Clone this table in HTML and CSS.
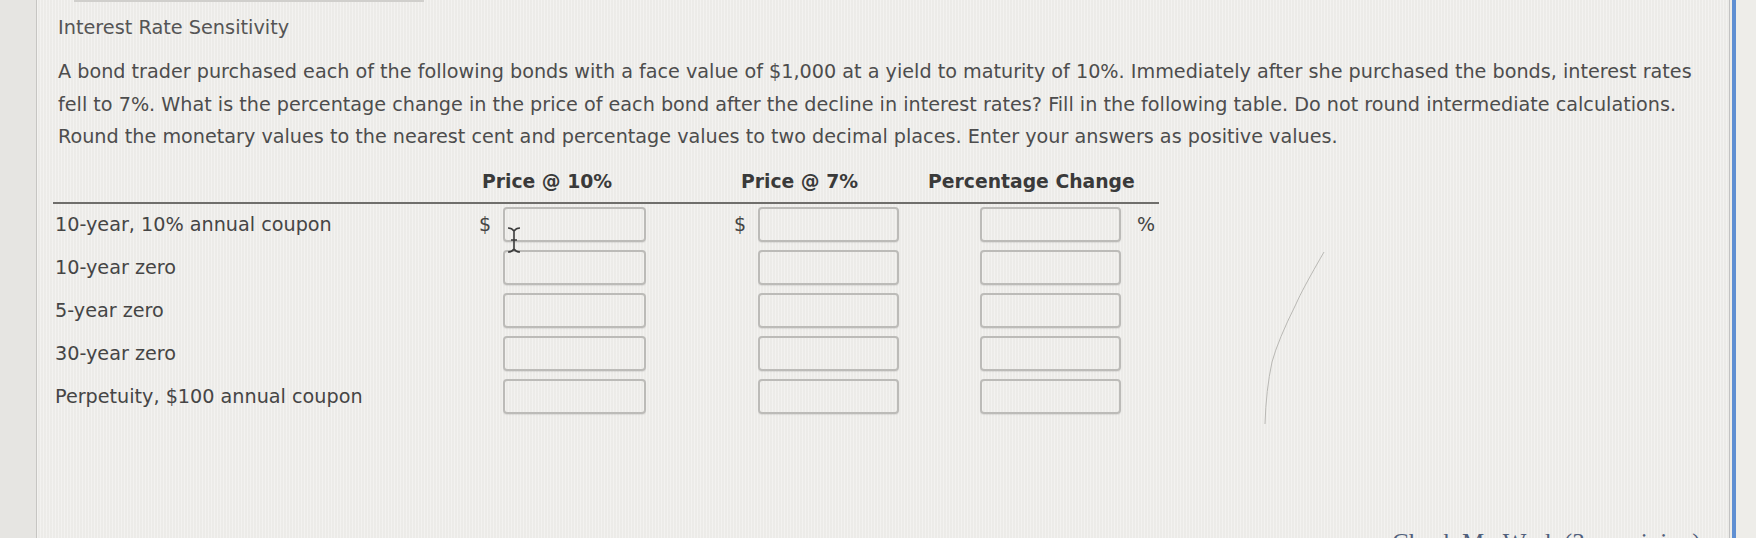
FILE: index.html
```html
<!DOCTYPE html>
<html lang="en">
<head>
<meta charset="utf-8">
<title>Interest Rate Sensitivity</title>
<link rel="stylesheet" href="styles.css">
</head>
<body>
<div class="screen">
  <div class="gutter"></div>
  <div class="panel">
    <div class="tabline"></div>
    <h1 class="title">Interest Rate Sensitivity</h1>
    <p class="prompt">A bond trader purchased each of the following bonds with a face value of $1,000 at a yield to maturity of 10%. Immediately after she purchased the bonds, interest rates<br>fell to 7%. What is the percentage change in the price of each bond after the decline in interest rates? Fill in the following table. Do not round intermediate calculations.<br>Round the monetary values to the nearest cent and percentage values to two decimal places. Enter your answers as positive values.</p>

    <div class="table-head">
      <div class="th th-p10">Price @ 10%</div>
      <div class="th th-p7">Price @ 7%</div>
      <div class="th th-pc">Percentage Change</div>
    </div>

    <div class="table-body">
      <div class="label">10-year, 10% annual coupon</div>
      <div class="unit">$</div><div class="box"></div>
      <div class="spacer"></div>
      <div class="unit">$</div><div class="box"></div>
      <div class="spacer"></div>
      <div class="box"></div><div class="unit pct">%</div>

      <div class="label">10-year zero</div>
      <div class="unit"></div><div class="box"></div>
      <div class="spacer"></div>
      <div class="unit"></div><div class="box"></div>
      <div class="spacer"></div>
      <div class="box"></div><div class="unit"></div>

      <div class="label">5-year zero</div>
      <div class="unit"></div><div class="box"></div>
      <div class="spacer"></div>
      <div class="unit"></div><div class="box"></div>
      <div class="spacer"></div>
      <div class="box"></div><div class="unit"></div>

      <div class="label">30-year zero</div>
      <div class="unit"></div><div class="box"></div>
      <div class="spacer"></div>
      <div class="unit"></div><div class="box"></div>
      <div class="spacer"></div>
      <div class="box"></div><div class="unit"></div>

      <div class="label">Perpetuity, $100 annual coupon</div>
      <div class="unit"></div><div class="box"></div>
      <div class="spacer"></div>
      <div class="unit"></div><div class="box"></div>
      <div class="spacer"></div>
      <div class="box"></div><div class="unit"></div>
    </div>

    <div class="check">Check My Work (3 remaining)</div>

    <svg class="ibeam" width="16" height="28" viewBox="0 0 16 28" aria-hidden="true">
      <path d="M2 2 Q6 2 8 5 Q10 2 14 2 M8 5 V23 M2 26 Q6 26 8 23 Q10 26 14 26 M5 14 H11" fill="none" stroke="#3a3a3a" stroke-width="1.6"/>
    </svg>
    <svg class="hair" width="70" height="180" viewBox="0 0 70 180" aria-hidden="true">
      <path d="M62 2 Q40 40 34 54 Q16 90 10 112 Q4 140 3 174" fill="none" stroke="#b9b8b4" stroke-width="1"/>
    </svg>
  </div>
  <div class="edge"><div class="edge-line"></div></div>
</div>
</body>
</html>
```
FILE: styles.css
```css
html, body {
  margin: 0;
  padding: 0;
  background: #e8e7e4;
}

.screen {
  display: flex;
  width: 1756px;
  height: 538px;
  overflow: hidden;
  font-family: "DejaVu Sans", Verdana, sans-serif;
  color: #4a4a4a;
}

.gutter {
  width: 36px;
  flex: none;
  background: #e6e5e2;
}

.panel {
  position: relative;
  flex: 1;
  padding-left: 21px;
  background-color: #efeeeb;
  background-image: repeating-linear-gradient(90deg, rgba(255,255,255,0.25) 0 1px, rgba(0,0,0,0.012) 1px 3px);
  border-left: 1px solid #c6c5c2;
  border-right: 1px solid #c2c2c2;
}

.tabline {
  width: 350px;
  height: 2px;
  margin-left: 16px;
  background: #d0cfcc;
}

.title {
  margin: 13px 0 0;
  font-size: 19.3px;
  line-height: 26px;
  font-weight: normal;
  color: #555;
}

.prompt {
  margin: 15px 0 0;
  font-size: 19.2px;
  line-height: 32.5px;
  white-space: nowrap;
  color: #4d4d4d;
}

.table-head,
.table-body {
  display: grid;
  grid-template-columns: 426px 24px 143px 88px 24px 141px 81px 141px 38px;
  width: 1106px;
  margin-left: -5px;
}

.table-head {
  margin-top: 16px;
  border-bottom: 2px solid #6f6e6b;
  padding-bottom: 8px;
}

.th {
  font-size: 18.8px;
  line-height: 24px;
  font-weight: bold;
  color: #3a3a3a;
  white-space: nowrap;
}

.th-p10 { grid-column: 2 / 4; padding-left: 3px; }
.th-p7  { grid-column: 5 / 7; padding-left: 7px; }
.th-pc  { grid-column: 7 / 10; padding-left: 29px; }

.table-body {
  margin-top: 3px;
  row-gap: 8px;
  grid-auto-rows: 35px;
  align-items: center;
}

.label {
  font-size: 19.2px;
  padding-left: 2px;
  color: #454545;
  white-space: nowrap;
}

.unit {
  font-size: 19px;
  color: #444;
}

.pct {
  padding-left: 16px;
}

.box {
  height: 35px;
  box-sizing: border-box;
  border: 2px solid #bcbbb8;
  border-radius: 4px;
  box-shadow: 0 1px 1px rgba(0,0,0,0.08);
}

.check {
  margin-top: 114px;
  margin-left: 1334px;
  font-family: "Liberation Serif", "Times New Roman", serif;
  font-size: 25px;
  line-height: 30px;
  color: #51607c;
  white-space: nowrap;
}

.ibeam {
  position: absolute;
  left: 469px;
  top: 226px;
}

.hair {
  position: absolute;
  left: 1225px;
  top: 250px;
}

.edge {
  width: 26px;
  flex: none;
  display: flex;
  padding-left: 2px;
  box-sizing: border-box;
  background: #eeede9;
}

.edge-line {
  width: 4px;
  background: #5f8fd2;
}
```
